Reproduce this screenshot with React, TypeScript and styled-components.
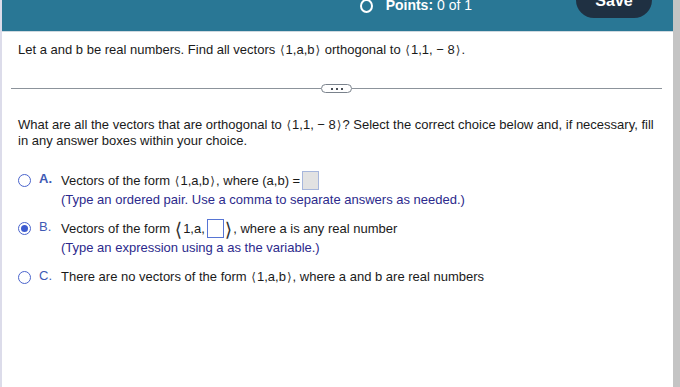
import React from 'react';
import styled, { createGlobalStyle } from 'styled-components';

const GlobalStyle = createGlobalStyle`
  html, body {
    margin: 0;
    padding: 0;
    background: #ffffff;
    overflow: hidden;
  }
  body {
    font-family: "Liberation Sans", Arial, sans-serif;
  }
`;

const Shell = styled.div`
  display: flex;
  width: 680px;
  height: 387px;
`;

const Page = styled.div`
  flex: 1;
  display: flex;
  flex-direction: column;
  border-left: 2px solid #dcdcea;
  overflow: hidden;
`;

const Scrollbar = styled.div`
  width: 7px;
  background: #c4c4c4;
`;

const Header = styled.div`
  height: 31px;
  background: #297795;
  border-bottom: 1px solid #cfd9e0;
  display: flex;
  align-items: flex-start;
  justify-content: flex-end;
  padding-right: 21px;
  overflow: hidden;
  flex-shrink: 0;
`;

const Points = styled.div`
  display: flex;
  align-items: flex-start;
  gap: 13px;
  margin-top: -3px;
  margin-right: 104px;
  color: #ffffff;
  font-size: 14px;
  line-height: 16px;
`;

const Ring = styled.span`
  width: 9px;
  height: 10px;
  border: 2px solid #ffffff;
  border-radius: 50%;
  margin-top: 2px;
`;

const SaveButton = styled.button`
  margin-top: -18px;
  width: 76px;
  height: 36px;
  border: none;
  border-radius: 18px;
  background: #1f3042;
  color: #ffffff;
  font-family: "Liberation Sans", sans-serif;
  font-weight: bold;
  font-size: 16px;
  padding-top: 2px;
`;

const Body = styled.div`
  padding: 0 10px 0 16px;
  font-size: 13px;
  color: #1a1a1a;
`;

const Prompt = styled.p`
  margin: 10px 0 0;
  line-height: 16px;
`;

const DividerRow = styled.div`
  display: flex;
  align-items: center;
  margin: 26px 0 0 -7px;
  width: 651px;
`;

const Rule = styled.div`
  flex: 1;
  height: 1px;
  background: #8c939b;
`;

const MoreButton = styled.div`
  width: 29px;
  height: 7px;
  border: 1px solid #7a828c;
  border-radius: 5px;
  display: flex;
  align-items: center;
  justify-content: center;
  gap: 3px;
`;

const Dot = styled.span`
  width: 2px;
  height: 2px;
  background: #4a5058;
`;

const Question = styled.p`
  margin: 24px 0 0;
  line-height: 16px;
`;

const Options = styled.div`
  display: flex;
  flex-direction: column;
  margin-top: 22px;
`;

const Option = styled.div<{ $gap: number }>`
  display: flex;
  align-items: flex-start;
  margin-bottom: ${(p) => p.$gap}px;
`;

const Radio = styled.span<{ $checked?: boolean }>`
  width: 11px;
  height: 11px;
  border: 1px solid #4a64cc;
  border-radius: 50%;
  margin: 3px 0 0 0;
  display: flex;
  align-items: center;
  justify-content: center;
  flex-shrink: 0;
  &::after {
    content: '';
    display: ${(p) => (p.$checked ? 'block' : 'none')};
    width: 7px;
    height: 7px;
    border-radius: 50%;
    background: #3d5bd0;
  }
`;

const Letter = styled.span<{ $bold?: boolean }>`
  width: 22px;
  margin-left: 8px;
  color: #3f5ab4;
  font-weight: ${(p) => (p.$bold ? 'bold' : 'normal')};
  line-height: 16px;
  flex-shrink: 0;
`;

const OptionText = styled.div`
  display: flex;
  flex-direction: column;
  gap: 2px;
`;

const Line = styled.div`
  display: flex;
  align-items: center;
  line-height: 18px;
  white-space: pre;
`;

const Hint = styled.div`
  color: #2c2a8c;
  line-height: 16px;
`;

const Angle = styled.span<{ $tall?: boolean }>`
  font-family: "DejaVu Sans", sans-serif;
  font-size: ${(p) => (p.$tall ? '19px' : '12px')};
  color: #333;
  margin: 0 1px;
`;

const AnswerBox = styled.span<{ $filled?: boolean }>`
  display: inline-block;
  width: 15px;
  height: 17px;
  border: 1px solid ${(p) => (p.$filled ? '#a6b6dc' : '#5775d4')};
  background: ${(p) => (p.$filled ? '#e2e2e2' : '#ffffff')};
  margin-left: 2px;
`;

export default function App() {
  return (
    <>
      <GlobalStyle />
      <Shell>
        <Page>
          <Header>
            <Points>
              <Ring />
              <span>
                <b>Points:</b> 0 of 1
              </span>
            </Points>
            <SaveButton>Save</SaveButton>
          </Header>
          <Body>
            <Prompt>
              Let a and b be real numbers. Find all vectors <Angle>⟨</Angle>1,a,b<Angle>⟩</Angle> orthogonal to{' '}
              <Angle>⟨</Angle>1,1, − 8<Angle>⟩</Angle>.
            </Prompt>
            <DividerRow>
              <Rule />
              <MoreButton>
                <Dot />
                <Dot />
                <Dot />
              </MoreButton>
              <Rule />
            </DividerRow>
            <Question>
              What are all the vectors that are orthogonal to <Angle>⟨</Angle>1,1, − 8<Angle>⟩</Angle>? Select the
              correct choice below and, if necessary, fill in any answer boxes within your choice.
            </Question>
            <Options>
              <Option $gap={11}>
                <Radio />
                <Letter $bold>A.</Letter>
                <OptionText>
                  <Line>
                    Vectors of the form <Angle>⟨</Angle>1,a,b<Angle>⟩</Angle>, where (a,b) =
                    <AnswerBox $filled />
                  </Line>
                  <Hint>(Type an ordered pair. Use a comma to separate answers as needed.)</Hint>
                </OptionText>
              </Option>
              <Option $gap={12}>
                <Radio $checked />
                <Letter>B.</Letter>
                <OptionText>
                  <Line>
                    Vectors of the form <Angle $tall>⟨</Angle>1,a,
                    <AnswerBox />
                    <Angle $tall>⟩</Angle>, where a is any real number
                  </Line>
                  <Hint>(Type an expression using a as the variable.)</Hint>
                </OptionText>
              </Option>
              <Option $gap={0}>
                <Radio />
                <Letter>C.</Letter>
                <OptionText>
                  <Line>
                    There are no vectors of the form <Angle>⟨</Angle>1,a,b<Angle>⟩</Angle>, where a and b are real
                    numbers
                  </Line>
                </OptionText>
              </Option>
            </Options>
          </Body>
        </Page>
        <Scrollbar />
      </Shell>
    </>
  );
}
